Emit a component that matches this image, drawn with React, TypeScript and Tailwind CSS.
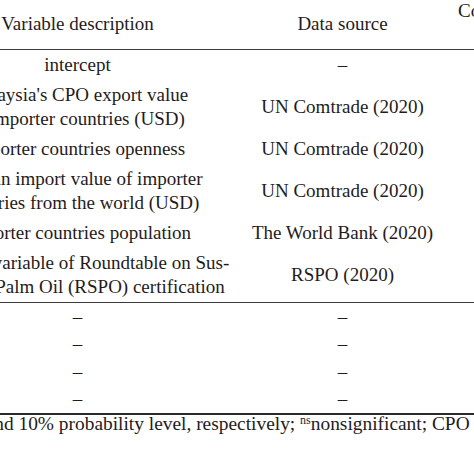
import React from "react";

const serif = { fontFamily: '"Liberation Serif", "Times New Roman", serif' };

type Row = { desc: string[]; src: string };

const rows: Row[] = [
  { desc: ["intercept"], src: "–" },
  { desc: ["Malaysia's CPO export value", "to importer countries (USD)"], src: "UN Comtrade (2020)" },
  { desc: ["Importer countries openness"], src: "UN Comtrade (2020)" },
  { desc: ["Median import value of importer", "countries from the world (USD)"], src: "UN Comtrade (2020)" },
  { desc: ["Importer countries population"], src: "The World Bank (2020)" },
  { desc: ["Dummy variable of Roundtable on Sus-", "tainable Palm Oil (RSPO) certification"], src: "RSPO (2020)" },
];

export default function App() {
  return (
    <div
      className="w-[474px] h-[474px] overflow-hidden bg-white text-[#1f1c1d] text-[19px] leading-[24px]"
      style={serif}
    >
      <div className="-ml-[72px] w-[730px] whitespace-nowrap">
        {/* header */}
        <div className="grid grid-cols-[299px_231px_200px] h-[49px]">
          <div className="flex items-center justify-center pb-[2px]">Variable description</div>
          <div className="flex items-center justify-center pb-[2px]">Data source</div>
          <div className="flex flex-col items-start -mt-[1px]">
            <span>Coefficient</span>
          </div>
        </div>
        <div className="h-px bg-[#3a3a3a]" />
        {rows.map((r, i) => (
          <div
            key={i}
            className={`grid grid-cols-[299px_231px_200px] ${r.desc.length > 1 ? "h-[54px]" : "h-[30px]"}`}
          >
            <div className="flex flex-col items-center justify-center">
              {r.desc.map((d, j) => (
                <span key={j}>{d}</span>
              ))}
            </div>
            <div className="flex items-center justify-center">{r.src}</div>
            <div />
          </div>
        ))}
        <div className="h-px bg-[#3a3a3a]" />
        {[0, 1, 2, 3].map((i) => (
          <div key={i} className="grid grid-cols-[299px_231px_200px] h-[27.5px]">
            <div className="flex items-center justify-center">–</div>
            <div className="flex items-center justify-center">–</div>
            <div />
          </div>
        ))}
        <div className="h-[2px] bg-[#2a2a2a]" />
      </div>
      <div className="-ml-[14.4px] whitespace-nowrap text-[19.4px] leading-[18px]">
        and 10% probability level, respectively; <sup className="text-[12px]">ns</sup>nonsignificant; CPO
      </div>
    </div>
  );
}
